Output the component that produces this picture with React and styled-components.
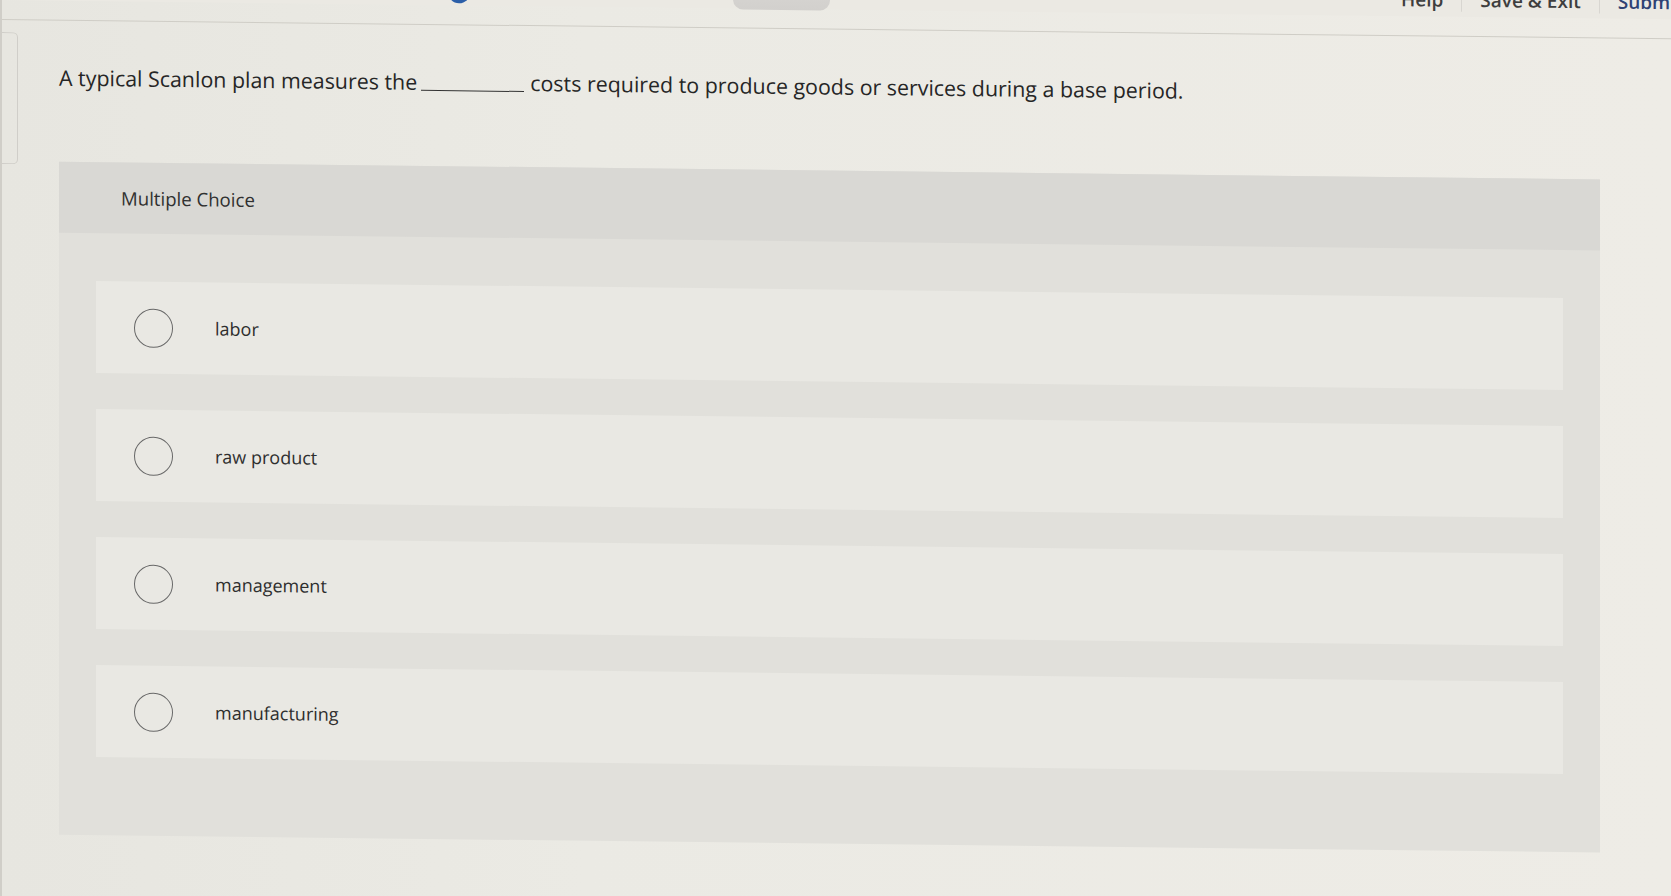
import React from "react";
import styled, { createGlobalStyle } from "styled-components";

const Global = createGlobalStyle`
  html, body { margin: 0; padding: 0; }
  html { overflow: hidden; background: #ebe9e3; }
  body {
    background: #ebe9e3;
    font-family: "Open Sans", "Liberation Sans", Arial, sans-serif;
    color: #2c2c2c;
    overflow: hidden;
    width: 1671px;
    height: 896px;
  }
`;

const Page = styled.div`
  width: 1671px;
  height: 896px;
  display: flex;
  flex-direction: column;
  background: linear-gradient(90deg, #e7e6e0 0%, #ebeae4 35%, #eeece6 100%);
  border-left: 2px solid #d0cec8;
  box-sizing: border-box;
  transform: skewY(0.66deg);
  transform-origin: 0 0;
`;

const TopBar = styled.header`
  height: 19px;
  flex: none;
  border-bottom: 1px solid #cfcdc6;
  display: flex;
  align-items: flex-start;
`;

const Dot = styled.span`
  flex: none;
  margin-left: 446px;
  margin-top: -24px;
  width: 22px;
  height: 22px;
  border-radius: 50%;
  background: #2b5ea8;
`;

const Pill = styled.span`
  flex: none;
  margin-left: 263px;
  margin-top: -30px;
  width: 97px;
  height: 31px;
  border-radius: 10px;
  background: linear-gradient(180deg, #d9d7d4, #d2d0cd);
`;

const NavGroup = styled.nav`
  flex: none;
  margin-left: 553px;
  margin-top: -29px;
  display: flex;
  align-items: center;
`;

const NavItem = styled.span`
  flex: none;
  font-size: 19px;
  font-weight: 600;
  line-height: 24px;
  color: ${(p) => (p.$accent ? "#2f4274" : "#3e3e3e")};
  padding: 0 18px;
  border-left: ${(p) => (p.$sep ? "1px solid #d8d6d1" : "none")};
  white-space: nowrap;
`;

const Body = styled.div`
  flex: 1;
  display: flex;
  min-height: 0;
`;

const SideTab = styled.div`
  flex: none;
  width: 15px;
  height: 130px;
  margin-top: 12px;
  border: 1px solid #d0cec9;
  border-left: none;
  border-radius: 0 5px 5px 0;
`;

const Content = styled.main`
  flex: 1;
  padding: 43px 0 0 41px;
  display: flex;
  flex-direction: column;
`;

const Question = styled.p`
  margin: 0;
  font-size: 21.4px;
  line-height: 28px;
  color: #262626;
  white-space: nowrap;
`;

const Blank = styled.span`
  display: inline-block;
  width: 103px;
  border-bottom: 1.5px solid #333;
  margin: 0 6px 0 4px;
  vertical-align: -1px;
`;

const Panel = styled.section`
  margin-top: 70px;
  width: 1541px;
  background: #e1e0db;
  display: flex;
  flex-direction: column;
  padding-bottom: 78px;
`;

const PanelHeader = styled.div`
  height: 71px;
  background: #d9d8d4;
  display: flex;
  align-items: center;
  padding-left: 62px;
  font-size: 18.6px;
  color: #303030;
`;

const Options = styled.div`
  display: flex;
  flex-direction: column;
  gap: 36px;
  padding: 48px 37px 0 37px;
`;

const Option = styled.label`
  height: 92px;
  background: #e9e8e3;
  display: flex;
  align-items: center;
  padding-left: 38px;
  gap: 42px;
  cursor: pointer;
`;

const Radio = styled.span`
  width: 37px;
  height: 37px;
  border: 1.5px solid #686868;
  border-radius: 50%;
  flex: none;
`;

const OptionText = styled.span`
  font-size: 18px;
  color: #2e2e2e;
`;

const choices = ["labor", "raw product", "management", "manufacturing"];

export default function App() {
  return (
    <>
      <Global />
      <Page>
        <TopBar>
          <Dot />
          <Pill />
          <NavGroup>
            <NavItem>Help</NavItem>
            <NavItem $sep>Save &amp; Exit</NavItem>
            <NavItem $sep $accent>Submit</NavItem>
          </NavGroup>
        </TopBar>
        <Body>
          <SideTab />
          <Content>
            <Question>
              A typical Scanlon plan measures the<Blank />costs required to produce goods or services during a base period.
            </Question>
            <Panel>
              <PanelHeader>Multiple Choice</PanelHeader>
              <Options>
                {choices.map((c) => (
                  <Option key={c}>
                    <Radio />
                    <OptionText>{c}</OptionText>
                  </Option>
                ))}
              </Options>
            </Panel>
          </Content>
        </Body>
      </Page>
    </>
  );
}
